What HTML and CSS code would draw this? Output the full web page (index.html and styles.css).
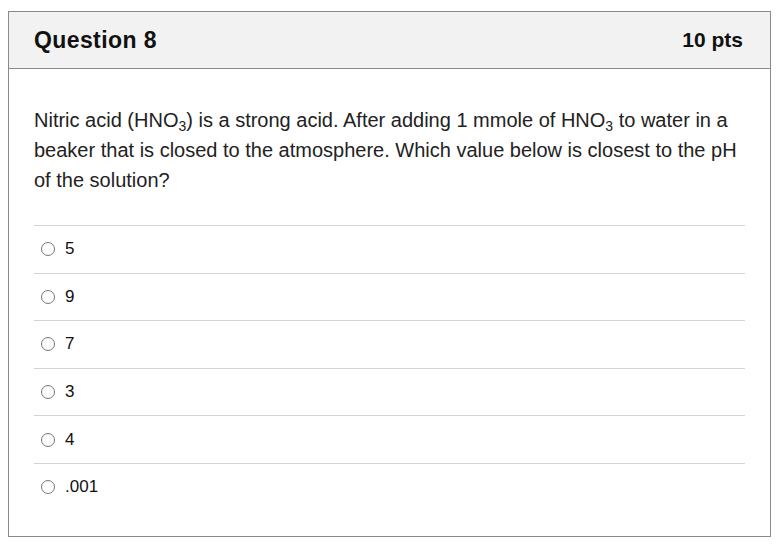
FILE: index.html
```html
<!DOCTYPE html>
<html>
<head>
<meta charset="utf-8">
<link rel="stylesheet" href="styles.css">
</head>
<body>
<div class="quiz">
  <div class="header">
    <div class="title">Question 8</div>
    <div class="pts">10 pts</div>
  </div>
  <div class="content">
    <p class="question">Nitric acid (HNO<sub>3</sub>) is a strong acid. After adding 1 mmole of HNO<sub>3</sub> to water in a beaker that is closed to the atmosphere. Which value below is closest to the pH of the solution?</p>
    <ul class="answers">
      <li class="answer"><span class="radio"></span><span>5</span></li>
      <li class="answer"><span class="radio"></span><span>9</span></li>
      <li class="answer"><span class="radio"></span><span>7</span></li>
      <li class="answer"><span class="radio"></span><span>3</span></li>
      <li class="answer"><span class="radio"></span><span>4</span></li>
      <li class="answer"><span class="radio"></span><span>.001</span></li>
    </ul>
  </div>
</div>
</body>
</html>
```
FILE: styles.css
```css
html, body {
  margin: 0;
  padding: 0;
  background: #fff;
}
body {
  padding: 11px 0 0 8px;
  font-family: "Liberation Sans", Arial, sans-serif;
  color: #222;
}
.quiz {
  width: 763px;
  height: 526px;
  border: 1px solid #8a8a8a;
  box-sizing: border-box;
}
.header {
  display: flex;
  justify-content: space-between;
  align-items: center;
  height: 57px;
  box-sizing: border-box;
  padding: 0 27px 0 25px;
  background: #f2f2f2;
  border-bottom: 1px solid #8a8a8a;
  color: #111;
  font-weight: bold;
}
.title {
  font-size: 23px;
  letter-spacing: 0.4px;
}
.pts {
  font-size: 21px;
}
.content {
  padding: 36px 25px 0 25px;
}
.question {
  margin: 0;
  font-size: 20px;
  line-height: 30px;
  color: #222;
}
.question sub {
  font-size: 14px;
  line-height: 0;
  vertical-align: -4px;
}
.answers {
  list-style: none;
  margin: 30px 0 0 0;
  padding: 0;
}
.answer {
  display: flex;
  align-items: center;
  gap: 10px;
  height: 47.6px;
  box-sizing: border-box;
  border-top: 1px solid #d3d3d3;
  padding: 0 0 0 7px;
  font-size: 17px;
  color: #111;
}
.radio {
  width: 14px;
  height: 14px;
  border: 1px solid #777;
  border-radius: 50%;
  box-sizing: border-box;
  flex: none;
}
```
